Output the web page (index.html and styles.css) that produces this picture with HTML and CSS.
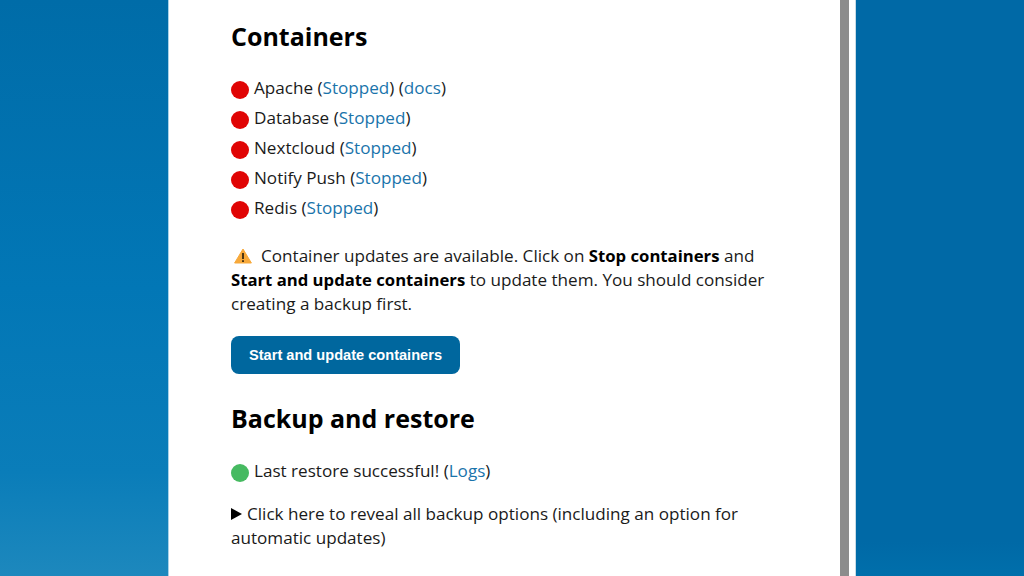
FILE: index.html
```html
<!DOCTYPE html>
<html>

<head>
    <meta charset="UTF-8">
    <title>Containers</title>
    <link rel="stylesheet" href="styles.css">
</head>

<body>
    <div class="panel">
        <div class="content">
            <h2 class="first">Containers</h2>
            <ul class="containers">
                <li><span class="dot red"></span><span>Apache (<a>Stopped</a>) (<a>docs</a>)</span></li>
                <li><span class="dot red"></span><span>Database (<a>Stopped</a>)</span></li>
                <li><span class="dot red"></span><span>Nextcloud (<a>Stopped</a>)</span></li>
                <li><span class="dot red"></span><span>Notify Push (<a>Stopped</a>)</span></li>
                <li><span class="dot red"></span><span>Redis (<a>Stopped</a>)</span></li>
            </ul>
            <p class="notice">
                <svg class="warn" viewBox="0 0 18 16" width="18" height="16">
                    <path d="M9 1 L17.4 15 H0.6 Z" fill="#f7a93b" stroke="#f7a93b" stroke-width="1" stroke-linejoin="round"/>
                    <rect x="8.1" y="5" width="1.8" height="6" fill="#3a2a10"/>
                    <rect x="8.1" y="12.2" width="1.8" height="1.8" fill="#3a2a10"/>
                </svg>Container updates are available. Click on <b>Stop containers</b> and <b>Start and update containers</b> to update them. You should consider creating a backup first.
            </p>
            <button class="btn">Start and update containers</button>
            <h2>Backup and restore</h2>
            <p class="status"><span class="dot green"></span><span>Last restore successful! (<a>Logs</a>)</span></p>
            <p class="reveal"><span class="arrow"></span>Click here to reveal all backup options (including an option for automatic updates)</p>
        </div>
        <div class="scrollbar"></div>
    </div>
</body>

</html>
```

FILE: styles.css
```css
* {
    margin: 0;
    padding: 0;
    box-sizing: border-box;
}

html,
body {
    height: 100%;
    overflow: hidden;
}

body {
    padding-left: 168px;
    font-family: "Open Sans", "Noto Sans", sans-serif;
    font-size: 17.1px;
    line-height: 24px;
    color: #1a1a1a;
    background-color: #0069a6;
    background-image: linear-gradient(180deg, #006ca8 0%, #0277b6 50%, #0a7db9 82%, #1d88bd 100%),
        linear-gradient(180deg, #0069a6 0%, #0069a6 94%, #006fab 100%);
    background-repeat: no-repeat;
    background-size: 168px 100%, 100% 100%;
}

.panel {
    width: 688px;
    height: 576px;
    background: #fff;
    border-left: 1px solid #a9d2e8;
    border-right: 1px solid #c9dbe6;
    display: flex;
    justify-content: space-between;
}

.content {
    width: 534px;
    margin-left: 62px;
    padding-top: 19px;
}

h2 {
    font-size: 25px;
    line-height: 34px;
    font-weight: 700;
    color: #000;
    margin-top: 27px;
}

h2.first {
    margin-top: 0;
}

a {
    color: #1a74ab;
}

li {
    list-style: none;
    height: 30px;
    display: flex;
    align-items: center;
}

li span:last-child,
.status span:last-child {
    margin-top: -2px;
}

.containers {
    margin-top: 21px;
}

.dot {
    display: inline-block;
    width: 18px;
    height: 18px;
    border-radius: 50%;
    margin-top: 2px;
    margin-right: 5px;
    flex-shrink: 0;
}

.red {
    background: #e00505;
}

.green {
    background: #46ba61;
}

.notice {
    margin-top: 20px;
}

.notice b {
    color: #000;
    font-size: 16.7px;
}

.warn {
    vertical-align: -2px;
    margin: 0 9px 0 3px;
}

.btn {
    display: block;
    margin-top: 20px;
    width: 229px;
    height: 38px;
    background: #00679e;
    color: #fff;
    border: none;
    border-radius: 8px;
    font-family: "Liberation Sans", Arial, sans-serif;
    font-size: 14.6px;
    font-weight: 700;
}

.status {
    margin-top: 25px;
    height: 24px;
    display: flex;
    align-items: center;
}

.reveal {
    margin-top: 18px;
}

.arrow {
    display: inline-block;
    width: 0;
    height: 0;
    border-left: 11px solid #000;
    border-top: 6px solid transparent;
    border-bottom: 6px solid transparent;
    margin-right: 5px;
}

.scrollbar {
    width: 9px;
    height: 100%;
    background: #8c8c8c;
    margin-right: 6px;
}
```
